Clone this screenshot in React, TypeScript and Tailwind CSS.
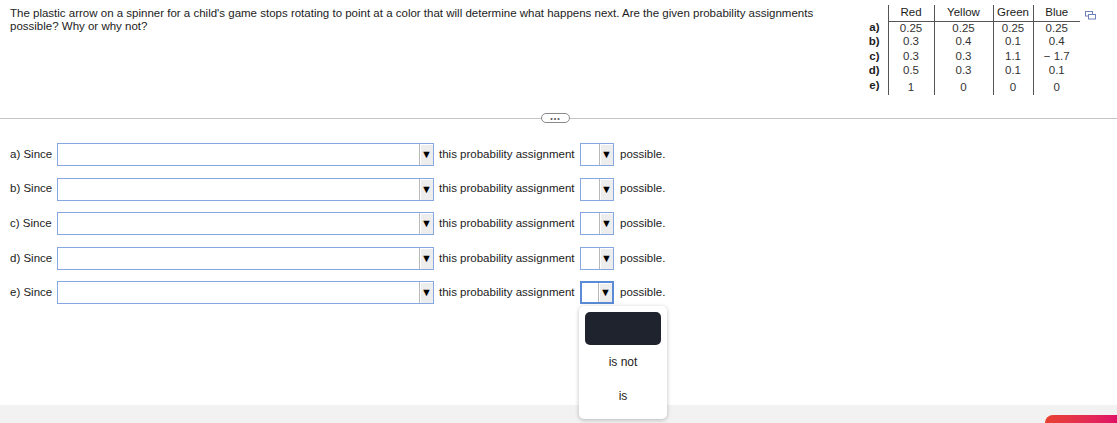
import React from "react";

const rows = [
  { l: "a)", v: ["0.25", "0.25", "0.25", "0.25"] },
  { l: "b)", v: ["0.3", "0.4", "0.1", "0.4"] },
  { l: "c)", v: ["0.3", "0.3", "1.1", "\u2212 1.7"] },
  { l: "d)", v: ["0.5", "0.3", "0.1", "0.1"] },
  { l: "e)", v: ["1", "0", "0", "0"] },
];

function Arrow() {
  return (
    <div className="h-full w-[14px] flex items-center justify-center bg-[#ededed] border-l border-[#b8b8b8] shadow-[inset_1px_1px_0_#fff]">
      <span className="text-[11px] leading-none text-black">▼</span>
    </div>
  );
}

function Select({ wide, focus }: { wide?: boolean; focus?: boolean }) {
  return (
    <div
      className={
        "h-[23px] flex justify-end bg-white " +
        (wide ? "w-[377px] " : "w-[34px] ") +
        (focus ? "border-2 border-[#5b8ad6]" : "border border-[#87a7e2]")
      }
    >
      <Arrow />
    </div>
  );
}

export default function App() {
  const labels = ["a", "b", "c", "d", "e"];
  return (
    <div className="relative h-[423px] w-[1117px] overflow-hidden bg-white text-[#1c1c1c] flex flex-col" style={{ fontFamily: '"Liberation Sans", Arial, sans-serif' }}>
      <div className="flex h-[112px]">
        <p className="ml-[10px] mt-[7px] w-[815px] text-[11.5px] leading-[12.5px]">
          The plastic arrow on a spinner for a child's game stops rotating to point at a color that will determine what happens next. Are the given probability assignments possible? Why or why not?
        </p>
        <div className="ml-[21px] mt-[5px] flex items-start">
          <table className="text-[11.5px] border-collapse">
            <thead>
              <tr className="h-[16px] leading-[15px]">
                <th className="w-[42px]"></th>
                <th className="w-[46px] font-normal border-l border-b border-[#555] align-top">Red</th>
                <th className="w-[59px] font-normal border-l border-b border-[#555] align-top">Yellow</th>
                <th className="w-[40px] font-normal border-l border-b border-[#555] align-top">Green</th>
                <th className="w-[47px] font-normal border-l border-b border-[#555] align-top">Blue</th>
              </tr>
            </thead>
            <tbody>
              {rows.map((r, i) => (
                <tr key={r.l} className={i === 4 ? "h-[17px] leading-[14px]" : "h-[14.3px] leading-[13px]"}>
                  <td className="font-bold text-right pr-[8px] align-top">{r.l}</td>
                  {r.v.map((v, j) => (
                    <td key={j} className={"text-center border-l border-[#555] text-[#333] align-top " + (i === 4 ? "pt-[2px]" : "")}>{v}</td>
                  ))}
                </tr>
              ))}
            </tbody>
          </table>
          <svg width="11" height="9" viewBox="0 0 11 9" className="ml-[5px] mt-[6px]">
            <rect x="0.5" y="0.5" width="7" height="4.5" fill="#fff" stroke="#7080b8" />
            <rect x="3.5" y="3.5" width="7" height="4.5" fill="#fff" stroke="#7080b8" />
          </svg>
        </div>
      </div>

      <div className="relative flex items-center h-[12px]">
        <div className="flex-1 h-px bg-[#c4c4c4]"></div>
        <div className="absolute left-[541px] top-[1px] w-[29px] h-[10px] rounded-full border border-[#8a8a8a] bg-white flex items-center justify-center">
          <span className="text-[7px] leading-none text-[#555] tracking-[1px]">•••</span>
        </div>
      </div>

      <div className="mt-[19px] flex flex-col">
        {labels.map((l, i) => (
          <div key={l} className="h-[34.6px] flex items-start text-[11.5px] whitespace-nowrap">
            <div className="h-[23px] flex items-center pl-[10px] w-[57px]">{l}) Since</div>
            <Select wide />
            <div className="h-[23px] flex items-center ml-[5px] w-[141px]">this probability assignment</div>
            <Select focus={i === 4} />
            <div className="h-[23px] flex items-center ml-[6px]">possible.</div>
          </div>
        ))}
      </div>

      <div className="absolute left-0 right-0 bottom-0 h-[18px] bg-[#f2f2f2] flex justify-end items-end">
        <div className="w-[72px] h-[8px] rounded-tl-[10px] bg-gradient-to-r from-[#e8402f] to-[#e01166]"></div>
      </div>

      <div className="absolute left-[579px] top-[306px] w-[88px] h-[113px] rounded-[5px] bg-white shadow-[0_1px_4px_rgba(0,0,0,0.25)] p-[6px] flex flex-col items-center text-[12px] leading-[14px]">
        <div className="w-full h-[33px] rounded-[5px] bg-[#1e232e]"></div>
        <div className="mt-[10px]">is not</div>
        <div className="mt-[20px]">is</div>
      </div>
    </div>
  );
}
